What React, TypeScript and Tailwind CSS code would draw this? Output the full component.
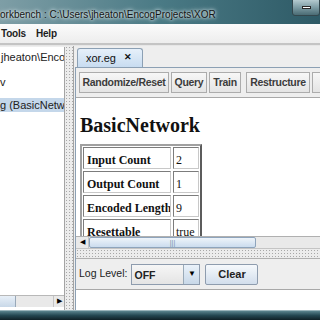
const ui = { fontFamily: '"Liberation Sans", Arial, sans-serif' };
const serif = { fontFamily: '"Liberation Serif", "Times New Roman", serif' };

function ToolButton({ label, w }: { label: string; w: string }) {
  return (
    <div
      className={`${w} h-[21px] shrink-0 flex items-center justify-center border border-[#acacac] bg-gradient-to-b from-[#f7f7f7] to-[#e4e4e4] text-[10.5px] font-bold tracking-[-0.3px] text-[#3c3c3c] whitespace-nowrap overflow-hidden`}
    >
      {label}
    </div>
  );
}

function Row({ name, value }: { name: string; value: string }) {
  return (
    <div className="flex shrink-0 gap-[2px] h-[22px]">
      <div className="w-[88px] border border-[#7c7c7c] border-r-[#c8c8c8] border-b-[#c8c8c8] pl-[3px] pt-[4px] leading-[16px] text-[12px] font-bold text-[#111] whitespace-nowrap overflow-hidden" style={serif}>
        {name}
      </div>
      <div className="w-[26px] border border-[#7c7c7c] border-r-[#c8c8c8] border-b-[#c8c8c8] pl-[2px] pt-[4px] leading-[16px] text-[12px] text-[#111] whitespace-nowrap overflow-hidden" style={serif}>
        {value}
      </div>
    </div>
  );
}

export default function App() {
  return (
    <div className="w-[320px] h-[320px] overflow-hidden flex flex-col bg-[#eeeeee]" style={ui}>
      {/* title bar */}
      <div className="h-[24px] shrink-0 flex items-start justify-between bg-gradient-to-r from-[#7e9ea6] via-[#4a7a85] to-[#2e5a66]">
        <span className="pt-[8px] leading-[14px] text-[10px] text-[#141414] whitespace-nowrap [text-shadow:0_0_5px_#eaf3f5,0_0_3px_#eaf3f5]">
          orkbench : C:\Users\jheaton\EncogProjects\XOR
        </span>
        <div className="w-[28px] h-[17px] mt-[-1px] rounded-b-[3px] border border-[#33474d] bg-gradient-to-b from-[#b4cacf] via-[#7d9ca4] to-[#4a6b74] flex items-center justify-center">
          <div className="w-[9px] h-[3px] bg-white border border-[#2a2a2a]" />
        </div>
      </div>
      {/* menu bar */}
      <div className="h-[19px] shrink-0 flex items-center gap-[10px] pl-[1px] bg-gradient-to-b from-[#fbfbfb] to-[#ededed] text-[10px] font-bold tracking-[-0.2px] text-[#1e1e1e]">
        <span>Tools</span>
        <span>Help</span>
      </div>
      <div className="h-[3px] shrink-0 bg-[#c4c4c4] border-b border-[#e6e6e6]" />

      {/* main area */}
      <div className="flex-1 flex min-h-0">
        {/* left tree */}
        <div className="w-[65px] shrink-0 flex flex-col bg-white border-r border-[#a4a4a4] mt-[1px]">
          <div className="flex-1 text-[11px] text-[#222] pt-[3px] whitespace-nowrap overflow-hidden">
            <div className="h-[14px] leading-[14px] flex items-center">
              <span className="w-[4px] h-[9px] bg-[#8a7b55] mr-[1px]" />jheaton\Encog
            </div>
            <div className="h-[11px]" />
            <div className="h-[14px] leading-[14px]">v</div>
            <div className="h-[9px]" />
            <div className="h-[14px] leading-[14px] bg-[#c4d7ea]">g (BasicNetwork)</div>
          </div>
          <div className="h-[12px] shrink-0 flex border-t border-[#b8b8b8] bg-[#e9e9e9]">
            <div className="w-[16px] bg-gradient-to-b from-[#e8f0f8] to-[#c8d8e8] border-r border-[#98a8b8]" />
            <div className="flex-1" />
            <div className="w-[11px] flex items-center justify-center border-l border-[#c4c4c4] text-[7px] text-black">▶</div>
          </div>
          <div className="h-[3px] shrink-0 bg-white" />
        </div>
        {/* splitter */}
        <div className="w-[8px] shrink-0 bg-[#ececec] [background-image:radial-gradient(#a8a8a8_0.6px,transparent_0.8px)] [background-size:3px_3px]" />

        {/* right side */}
        <div className="flex-1 flex flex-col min-w-0 border-l border-[#a4a4a4] pl-[1px]">
          {/* tab header */}
          <div className="h-[21px] shrink-0 flex items-end pl-[2px]">
            <div className="h-[19px] w-[66px] flex items-center gap-[8px] pl-[8px] rounded-t-[3px] border border-b-0 border-[#8ca0b4] bg-gradient-to-b from-[#e6f0fa] to-[#c8dcf0] text-[11px] text-[#111]">
              <span>xor.eg</span>
              <span className="text-[9px] font-bold">✕</span>
            </div>
          </div>
          <div className="flex-1 flex flex-col min-h-0 border-t border-l border-[#8ca0b4]">
            {/* toolbar */}
            <div className="h-[30px] shrink-0 flex items-start gap-[2px] pt-[4px] pl-[3px] border-b border-[#a8a8a8] bg-[#eeeeee] overflow-hidden">
              <ToolButton label="Randomize/Reset" w="w-[90px]" />
              <ToolButton label="Query" w="w-[36px]" />
              <ToolButton label="Train" w="w-[32px]" />
              <div className="w-[1px] shrink-0" />
              <ToolButton label="Restructure" w="w-[64px]" />
              <ToolButton label="Bo" w="w-[30px]" />
            </div>
            {/* content */}
            <div className="h-[138px] shrink-0 bg-white pl-[4px] overflow-hidden">
              <div className="text-[20px] font-bold text-[#111] mt-[15px] leading-[24px]" style={serif}>
                BasicNetwork
              </div>
              <div className="mt-[7px] inline-flex flex-col gap-[2px] p-[1px] border-2 border-[#a0a0a0] border-r-[#5c5c5c] border-b-[#5c5c5c]">
                <Row name="Input Count" value="2" />
                <Row name="Output Count" value="1" />
                <Row name="Encoded Length" value="9" />
                <Row name="Resettable" value="true" />
              </div>
            </div>
            {/* h scroll */}
            <div className="h-[12px] shrink-0 flex bg-[#e9e9e9] border-t border-[#b0b0b0]">
              <div className="w-[13px] flex items-center justify-center border-r border-[#c4c4c4] text-[7px] text-black">◀</div>
              <div className="w-[167px] rounded-[2px] border border-[#8ea4bc] bg-gradient-to-b from-[#eef4fa] to-[#cbdcee] flex items-center justify-center">
                <span className="text-[7px] text-[#7890a8] leading-none">|||</span>
              </div>
            </div>
            {/* horizontal splitter */}
            <div className="h-[11px] shrink-0 bg-[#ececec] [background-image:radial-gradient(#a8a8a8_0.6px,transparent_0.8px)] [background-size:3px_3px] border-t border-[#c4c4c4] border-b border-b-[#b0b0b0]" />
            {/* log panel */}
            <div className="h-[30px] shrink-0 flex items-center pl-[3px] bg-[#eeeeee]">
              <span className="text-[10.5px] text-[#222]">Log Level:</span>
              <div className="h-[21px] w-[69px] ml-[4px] flex border border-[#8e9cae] bg-white">
                <div className="flex-1 pl-[2px] pt-[3px] text-[10.5px] font-bold text-[#222] bg-gradient-to-b from-[#f6f6f6] to-[#e4e4e4]">OFF</div>
                <div className="w-[16px] flex items-center justify-center border-l border-[#9aaab8] bg-gradient-to-b from-[#eaf2fa] to-[#c8d8e8] text-[8px] text-black">▼</div>
              </div>
              <div className="h-[21px] w-[53px] ml-[5px] flex items-center justify-center border border-[#8e9cae] rounded-[2px] bg-gradient-to-b from-[#f6f9fc] to-[#d2deec] text-[11px] font-bold text-[#222]">
                Clear
              </div>
            </div>
            <div className="flex-1 bg-white border-t border-[#a8a8a8]" />
          </div>
        </div>
      </div>
      {/* bottom frame */}
      <div className="h-[10px] shrink-0 bg-gradient-to-b from-[#5a848e] via-[#234650] to-[#0f2026] border-t border-[#9ab4ba]" />
    </div>
  );
}
